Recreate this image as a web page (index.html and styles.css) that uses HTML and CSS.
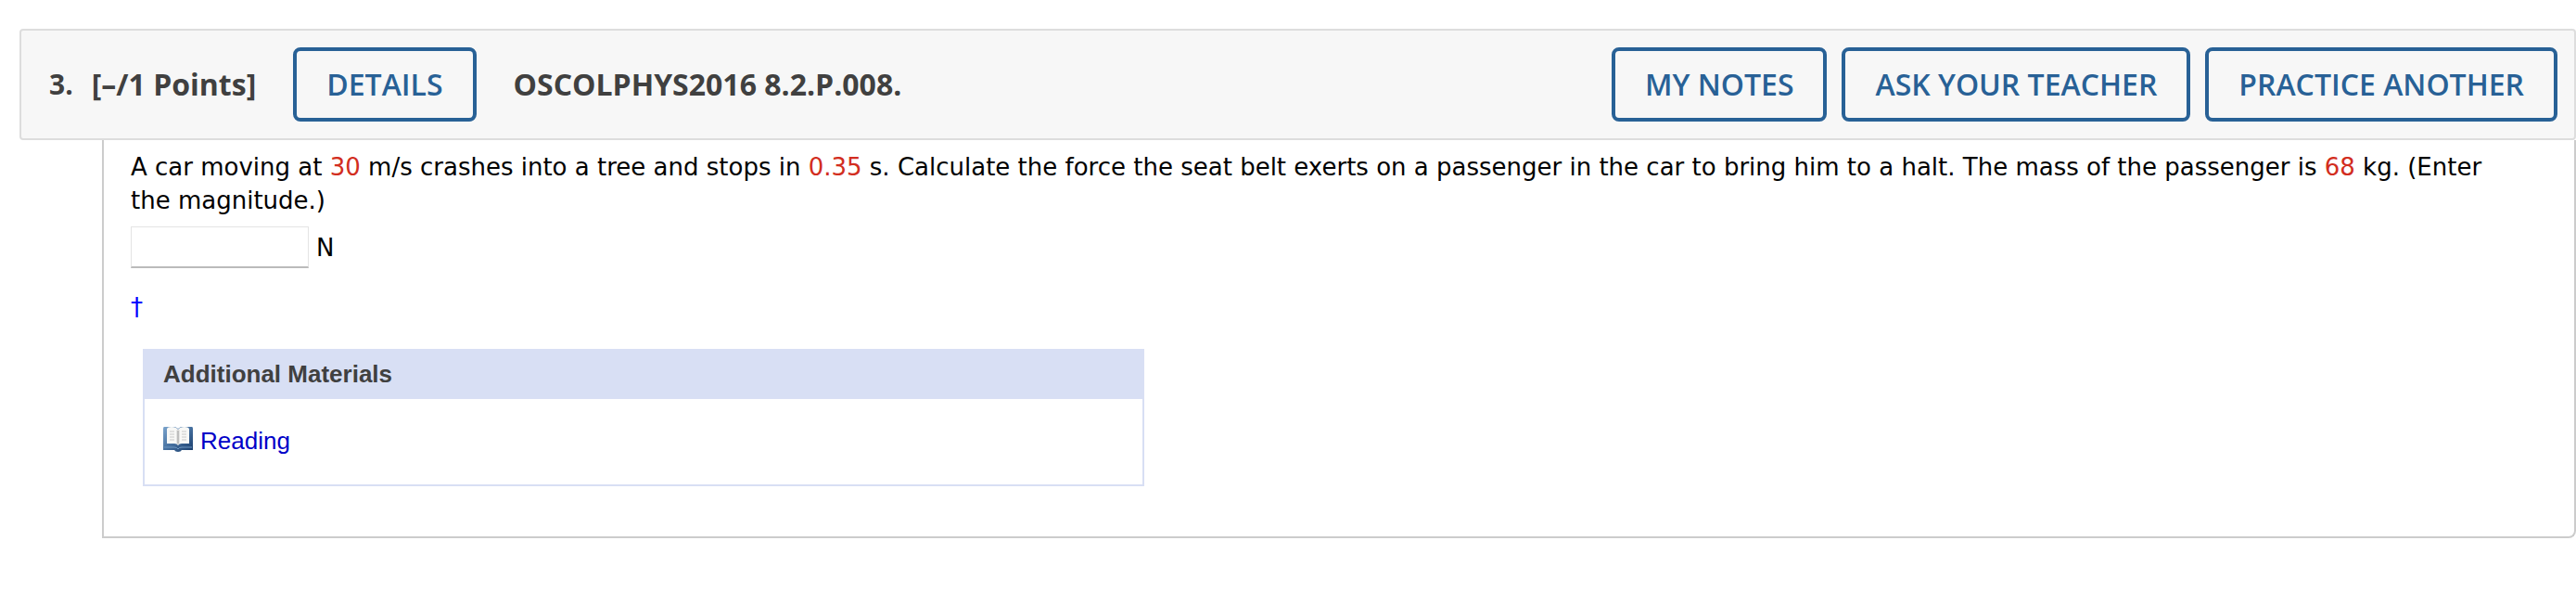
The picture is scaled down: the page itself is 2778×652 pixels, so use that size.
FILE: index.html
```html
<!DOCTYPE html>
<html lang="en">
<head>
<meta charset="utf-8">
<title>Question 3</title>
<link rel="stylesheet" href="styles.css">
</head>
<body>
<main class="question">
  <header class="question-header">
    <span class="number">3.</span>
    <span class="points">[–/1 Points]</span>
    <button class="btn details" type="button">DETAILS</button>
    <h1 class="title">OSCOLPHYS2016 8.2.P.008.</h1>
    <div class="actions">
      <button class="btn" type="button">MY NOTES</button>
      <button class="btn" type="button">ASK YOUR TEACHER</button>
      <button class="btn" type="button">PRACTICE ANOTHER</button>
    </div>
  </header>
  <section class="question-body">
    <p class="prompt">A car moving at <span class="value">30</span> m/s crashes into a tree and stops in <span class="value">0.35</span> s. Calculate the force the seat belt exerts on a passenger in the car to bring him to a halt. The mass of the passenger is <span class="value">68</span> kg. (Enter the magnitude.)</p>
    <div class="answer">
      <input class="answer-input" id="answer" type="text">
      <label for="answer">N</label>
    </div>
    <a class="footnote" href="#">†</a>
    <section class="materials">
      <h2 class="materials-title">Additional Materials</h2>
      <div class="materials-body">
        <a class="reading" href="#">
          <svg class="book" viewBox="0 0 32 28" aria-hidden="true">
            <defs>
              <linearGradient id="cover" x1="0" y1="0" x2="1" y2="1">
                <stop offset="0" stop-color="#7ba4cd"/>
                <stop offset=".5" stop-color="#456f9e"/>
                <stop offset="1" stop-color="#163a69"/>
              </linearGradient>
              <linearGradient id="gutter">
                <stop offset="0" stop-color="#f8f8f6"/>
                <stop offset=".5" stop-color="#aaa"/>
                <stop offset="1" stop-color="#f8f8f6"/>
              </linearGradient>
            </defs>
            <path d="M0 2Q0 0 1 0H13L16 2 19 0H31Q32 0 32 2V25H20Q19 27 16 27T12 25H0Z" fill="url(#cover)"/>
            <path d="M1 22H12Q15 22 16 24 17 22 20 22H31" fill="none" stroke="#6f98c2"/>
            <path d="M4 2Q5 0 9 0 14 0 16 3 18 0 23 0 27 0 28 2V18H20Q17 18 16 20 15 18 12 18H4Z" fill="#f8f8f6"/>
            <path d="M14 3 16 4 18 3V17L16 19 14 17Z" fill="url(#gutter)"/>
            <path d="M7 5h5M7 8h5M7 11h5M7 14h5M20 5h5M20 8h5M20 11h5M20 14h5" stroke="#c8c8c8" stroke-width="1.2"/>
          </svg>
          <span>Reading</span>
        </a>
      </div>
    </section>
  </section>
</main>
</body>
</html>
```
FILE: styles.css
```css
* {
  box-sizing: border-box;
}

body {
  margin: 0;
  background: #fff;
  color: #000;
}

.question {
  padding: 31px 0 0 21px;
}

.question-header {
  display: flex;
  align-items: center;
  min-height: 120px;
  padding: 18px;
  padding-left: 30px;
  border: 2px solid #ddd;
  border-radius: 4px;
  background: #f7f7f7;
  color: #404040;
  font: bold 32px/40px "Open Sans", sans-serif;
}

.number {
  margin-right: 20px;
  font-size: 30px;
}

.points {
  margin-right: 40px;
}

.title {
  margin: 0 0 0 40px;
  font-size: 32px;
  line-height: 40px;
}

.actions {
  display: flex;
  gap: 16px;
  margin-left: auto;
}

.btn {
  height: 80px;
  padding: 0 32px;
  border: 4px solid #286196;
  border-radius: 8px;
  background: transparent;
  color: #286196;
  font: 600 32px/40px "Open Sans", sans-serif;
  white-space: nowrap;
}

.question-body {
  margin-left: 89px;
  padding: 11px 60px 54px 29px;
  border: 2px solid #ccc;
  border-top: 0;
  border-bottom-right-radius: 8px;
  font: 26px/36px Verdana, "DejaVu Sans", sans-serif;
}

.prompt {
  margin: 0;
}

.value {
  color: #d22d20;
}

.answer {
  display: flex;
  align-items: center;
  gap: 8px;
  margin-top: 10px;
}

.answer-input {
  width: 192px;
  height: 45px;
  padding: 4px 8px;
  border: 1px solid #e4e4e4;
  border-bottom: 2px solid #bbb;
  background: #fff;
  font: inherit;
}

.footnote {
  display: block;
  width: fit-content;
  margin-top: 24px;
  color: #00f;
  text-decoration: none;
}

.materials {
  max-width: 1080px;
  margin: 27px 0 0 13px;
  border: 2px solid #d8dff4;
  font: 26px/30px Arial, "Liberation Sans", sans-serif;
}

.materials-title {
  margin: 0;
  padding: 10px 20px 12px;
  background: #d8dff4;
  color: #404040;
  font-size: 26px;
  line-height: 30px;
}

.materials-body {
  padding: 30px 20px 32px;
}

.reading {
  display: flex;
  align-items: flex-start;
  gap: 8px;
  width: fit-content;
  color: #0000c8;
  text-decoration: none;
}

.book {
  width: 32px;
  height: 28px;
}
```
